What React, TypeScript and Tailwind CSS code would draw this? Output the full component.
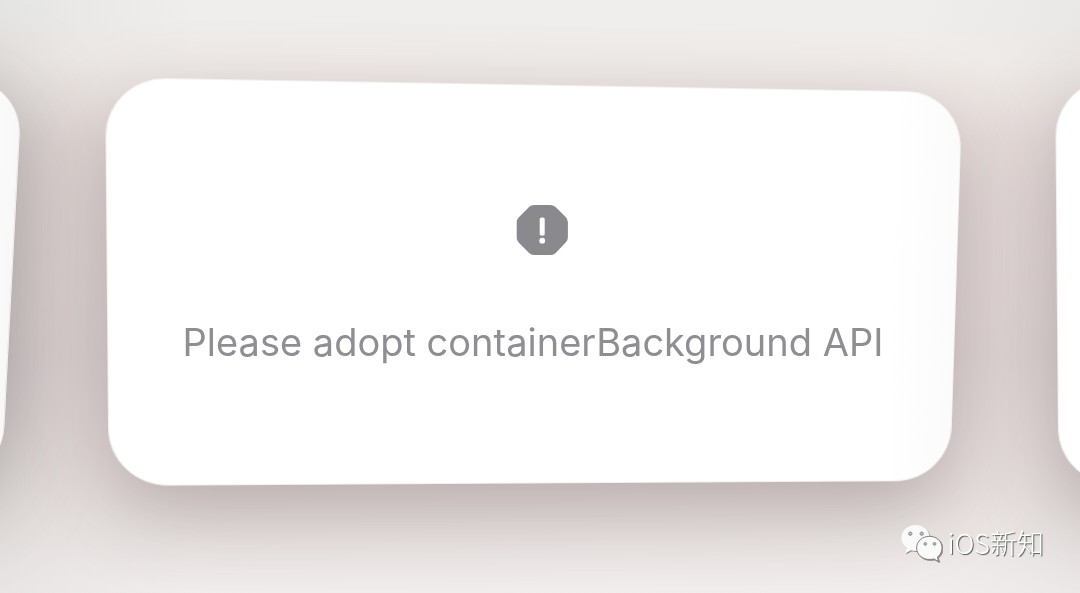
function StopAlertIcon() {
  return (
    <svg viewBox="0 0 54 52" className="ml-4 h-[52px] w-[54px] shrink-0" aria-hidden="true">
      <path
        d="M20 4.200h16.400c1.100 0 1.800.3 2.600 1L49.600 15.700c.8.8 1 1.500 1 2.600v15c0 1.100-.3 1.900-1 2.600L39.300 46.600c-.8.8-1.500 1.100-2.600 1.100H20c-1.100 0-1.900-.4-2.600-1.100L7 36.200c-.8-.8-1-1.500-1-2.600V18.400c0-1.100.2-1.800 1-2.600L17.400 5.200c.8-.7 1.500-1 2.600-1z"
        fill="#8a898e"
        stroke="#8a898e"
        strokeWidth="6.600"
        strokeLinejoin="round"
      />
      <rect x="25.700" y="13.500" width="5" height="18" rx="1.600" fill="#fff" />
      <circle cx="28.200" cy="36.700" r="2.900" fill="#fff" />
    </svg>
  );
}

function WeChatIcon() {
  return (
    <svg
      viewBox="0 0 42 38"
      className="h-[38px] w-[42px] drop-shadow-[1px_1px_0_rgba(90,85,85,0.6)]"
      aria-hidden="true"
    >
      <path
        d="M15.500 1C7.500 1 1.500 6.700 1.500 14c0 4.200 2 7.800 5.300 10.200L5 29.500l6-3.200c1.500.4 3 .6 4.500.6 8 0 14.300-5.700 14.300-13S23.500 1 15.500 1z"
        fill="#fafafa"
      />
      <path
        d="M29.500 12.300c-7.100 0-12.900 5-12.900 11.600s5.800 11.600 12.900 11.600c1.600 0 3-.2 4.300-.6l5 2.700-1.400-4.500c2.900-2.100 4.600-5.500 4.600-9.200 0-6.600-5.400-11.600-12.500-11.600z"
        fill="#fafafa"
        stroke="#777475"
        strokeWidth=".9"
      />
      <g fill="#c4c0c0" stroke="#7b7878" strokeWidth=".8">
        <circle cx="10.300" cy="9.700" r="1.700" />
        <circle cx="21.700" cy="9.700" r="1.700" />
        <circle cx="25.300" cy="19.900" r="1.400" />
        <circle cx="34.500" cy="19.900" r="1.400" />
      </g>
    </svg>
  );
}

const surface =
  "absolute inset-0 origin-top-left rounded-[58px] border border-[#f3efef] bg-[linear-gradient(90deg,#fff_92%,#fbfbfb)] shadow-[0_30px_84px_rgba(60,46,48,0.31)]";

export default function App() {
  return (
    <main className="relative flex min-h-screen items-center overflow-hidden bg-[linear-gradient(90deg,rgba(90,96,94,0.06),rgba(90,96,94,0)_18%,rgba(90,96,94,0)_85%,rgba(90,96,94,0.04)),linear-gradient(180deg,#eeeeed_0%,#f1edea_10%,#ebe1df_24%,#e5dada_60%,#ebe4e2_84%,#f1eeed_100%)]">
      <div className="flex w-full justify-center gap-[90px] pr-[14px] pb-[32px]">
        <div className="relative w-4/5 shrink-0" aria-hidden="true">
          <div className="absolute inset-0 -translate-x-[5px] -skew-x-3 rounded-[58px] border border-[#f3efef] bg-[linear-gradient(90deg,#fff_92%,#f8f8f8)] shadow-[0_14px_96px_rgba(50,50,50,0.4)]" />
        </div>
        <section className="relative flex w-4/5 shrink-0 flex-col items-center gap-[62px] pt-[126px] pb-[118px]">
          <div
            className={`${surface} [transform:matrix3d(1.0572,0.01843,0,0.0000606,0.008768,1.02727,0,0.00004872,0,0,1,0,-2,-1,0,1)]`}
          />
          <div className="relative">
            <StopAlertIcon />
          </div>
          <p className="relative font-['Inter',sans-serif] text-[38px] leading-[48px] whitespace-nowrap text-[#8e8e93]">
            Please adopt containerBackground API
          </p>
        </section>
        <div className="relative w-4/5 shrink-0" aria-hidden="true">
          <div
            className={`${surface} [transform:matrix3d(1.0572,0.01843,0,0.0000606,0.008768,1.02727,0,0.00004872,0,0,1,0,6,-1,0,1)]`}
          />
        </div>
      </div>
      <div className="absolute right-9 bottom-[30px] flex items-center gap-[6px]">
        <WeChatIcon />
        <span className="font-['Noto_Sans_CJK_SC',sans-serif] text-[27px] leading-[40px] font-light text-white [text-shadow:1px_1px_1px_#555,0_0_1px_#fff]">
          iOS新知
        </span>
      </div>
    </main>
  );
}
